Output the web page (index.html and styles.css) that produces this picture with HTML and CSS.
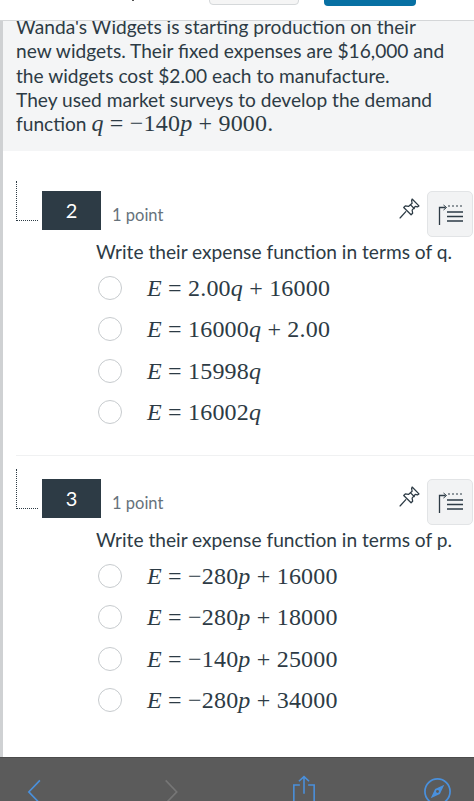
FILE: index.html
```html
<!DOCTYPE html>
<html lang="en">
<head>
<meta charset="utf-8">
<title>Quiz</title>
<link rel="stylesheet" href="styles.css">
</head>
<body>
<header class="topbar">
  <span class="tick"></span>
  <span class="btn btn-light"></span>
  <span class="btn btn-blue"></span>
</header>
<main class="page">
  <section class="intro">
    <p>Wanda's Widgets is starting production on their new widgets. Their fixed expenses are $16,000 and the widgets cost $2.00 each to manufacture.<br>They used market surveys to develop the demand function <span class="m"><i>q</i> = −140<i>p</i> + 9000.</span></p>
  </section>

  <section class="question q2">
    <div class="q-head">
      <span class="corner"></span>
      <span class="num">2</span>
      <span class="pts">1 point</span>
      <svg class="pin" viewBox="0 0 20 20" aria-hidden="true"><g fill="none" stroke="#2d3b45" stroke-width="1.200" stroke-linejoin="round" stroke-linecap="round"><path d="M12.500 1L19 7.500l-1.500 1-2-.5-3 3.500.5 3-1.500 1.500-7-7L6 7.500l3 .5 3.500-3-.5-2.500z"/><path d="M1 19l5.500-6"/><path d="M11 6.500l3.500 3.500"/></g></svg>
      <span class="tool"><svg viewBox="0 0 26 26" aria-hidden="true"><g fill="none" stroke="#2d3b45" stroke-width="1.300"><path d="M2.500 24V6.500h6"/><path d="M6.500 4l3 2.500-3 2.500" stroke-width="1"/><path d="M11 5h2M15 5h2M19 5h2M23 5h2" stroke-width="1"/><path d="M10 11h16M10 15.500h16M10 20h16"/></g></svg></span>
    </div>
    <p class="prompt">Write their expense function in terms of q.</p>
    <ul class="opts">
      <li><span class="radio"></span><span class="m"><i>E</i> = 2.00<i>q</i> + 16000</span></li>
      <li><span class="radio"></span><span class="m"><i>E</i> = 16000<i>q</i> + 2.00</span></li>
      <li><span class="radio"></span><span class="m"><i>E</i> = 15998<i>q</i></span></li>
      <li><span class="radio"></span><span class="m"><i>E</i> = 16002<i>q</i></span></li>
    </ul>
  </section>

  <hr class="rule">

  <section class="question q3">
    <div class="q-head">
      <span class="corner"></span>
      <span class="num">3</span>
      <span class="pts">1 point</span>
      <svg class="pin" viewBox="0 0 20 20" aria-hidden="true"><g fill="none" stroke="#2d3b45" stroke-width="1.200" stroke-linejoin="round" stroke-linecap="round"><path d="M12.500 1L19 7.500l-1.500 1-2-.5-3 3.500.5 3-1.500 1.500-7-7L6 7.500l3 .5 3.500-3-.5-2.500z"/><path d="M1 19l5.500-6"/><path d="M11 6.500l3.500 3.500"/></g></svg>
      <span class="tool"><svg viewBox="0 0 26 26" aria-hidden="true"><g fill="none" stroke="#2d3b45" stroke-width="1.300"><path d="M2.500 24V6.500h6"/><path d="M6.500 4l3 2.500-3 2.500" stroke-width="1"/><path d="M11 5h2M15 5h2M19 5h2M23 5h2" stroke-width="1"/><path d="M10 11h16M10 15.500h16M10 20h16"/></g></svg></span>
    </div>
    <p class="prompt">Write their expense function in terms of p.</p>
    <ul class="opts">
      <li><span class="radio"></span><span class="m"><i>E</i> = −280<i>p</i> + 16000</span></li>
      <li><span class="radio"></span><span class="m"><i>E</i> = −280<i>p</i> + 18000</span></li>
      <li><span class="radio"></span><span class="m"><i>E</i> = −140<i>p</i> + 25000</span></li>
      <li><span class="radio"></span><span class="m"><i>E</i> = −280<i>p</i> + 34000</span></li>
    </ul>
  </section>
</main>
<footer class="safari">
  <svg class="ico back" viewBox="0 0 18 30" aria-hidden="true"><path d="M14.500 3L2 16l12.500 13" fill="none" stroke="#4a90dc" stroke-width="1.800"/></svg>
  <svg class="ico fwd" viewBox="0 0 18 30" aria-hidden="true"><path d="M3 3l12.500 13L3 29" fill="none" stroke="#767676" stroke-width="1.800"/></svg>
  <svg class="ico share" viewBox="0 0 26 32" aria-hidden="true"><g fill="none" stroke="#4a90dc" stroke-width="1.700"><path d="M8.500 10.500H2v21h22v-21h-6.500"/><path d="M13 20V1.500M7.500 6.500L13 1.500l5.500 5"/></g></svg>
  <svg class="ico compass" viewBox="0 0 30 32" aria-hidden="true"><circle cx="15" cy="15" r="13" fill="none" stroke="#4a90dc" stroke-width="1.800"/><path d="M22 8l-9.500 4.500L8 22l9.500-4.500z" fill="#4a90dc"/><circle cx="15" cy="15" r="1.500" fill="#5b5b5b"/></svg>
</footer>
</body>
</html>
```
FILE: styles.css
```css
* { box-sizing: border-box; }
html, body { margin: 0; padding: 0; }
body {
  width: 474px;
  height: 801px;
  overflow: hidden;
  background: #fff;
  color: #2d3b45;
  font-family: Lato, "Liberation Sans", sans-serif;
  display: flex;
  flex-direction: column;
}
p { margin: 0; }
.topbar {
  position: relative;
  flex: 0 0 21px;
  background: #fff;
  border-bottom: 1px solid #d4d6d8;
}
.tick { position: absolute; left: 132px; top: 0; width: 2px; height: 1px; background: #555; }
.btn { position: absolute; top: -10px; border-radius: 4px; }
.btn-light { left: 209px; width: 90px; height: 15px; background: #f5f5f5; border: 1px solid #d5d8da; }
.btn-blue { left: 324px; width: 92px; height: 16px; background: #0770a3; }
.page {
  flex: 1;
  min-height: 0;
  overflow: hidden;
  border-left: 3px solid #cfd1d3;
  background: #fff;
}
.intro {
  height: 130px;
  overflow: hidden;
  background: #f4f5f6;
  padding: 0 26px 0 13px;
  font-size: 19.150px;
  line-height: 24.300px;
}
.intro p { margin-top: -6px; }
.m {
  font-family: "Liberation Serif", "Times New Roman", serif;
  font-size: 24px;
  letter-spacing: .2px;
  line-height: 20px;
  color: #2d3b45;
}
.question { display: flex; flex-direction: column; }
.q2 { padding-top: 40px; }
.rule { height: 1px; margin: 22px 0 23px 13px; border: 0; background: #f0f1f2; }
.q-head { position: relative; height: 39px; }
.corner {
  position: absolute; left: 13px; top: -10px; width: 22px; height: 40px;
  border-left: 1px dotted #2d3b45;
  border-bottom: 1px dotted #2d3b45;
}
.num {
  position: absolute; left: 39px; top: 0; width: 59px; height: 39px;
  background: #2d3b45; color: #fff;
  font-size: 20px; line-height: 39px; text-align: center;
}
.pts { position: absolute; left: 109px; top: 13px; font-size: 16.500px; line-height: 22px; color: #66727b; }
.pin { position: absolute; left: 396px; top: 7px; width: 21px; height: 21px; }
.tool {
  position: absolute; left: 424px; top: 0; width: 46px; height: 46px;
  background: #f2f3f4; border: 1px solid #e2e4e6; border-radius: 5px;
  display: flex; align-items: center; justify-content: center;
}
.tool svg { width: 26px; height: 26px; }
.prompt { margin: 10px 0 0 93px; font-size: 19.150px; line-height: 24px; white-space: nowrap; }
.opts { list-style: none; margin: 3px 0 0 95px; padding: 0; }
.opts li { display: flex; align-items: center; height: 41.500px; }
.radio {
  flex: 0 0 24px; height: 24px; border-radius: 50%;
  background: #fff; border: 1.500px solid #c7cbce;
  margin-right: 25px;
}
.safari {
  position: relative;
  flex: 0 0 44px;
  background: #5b5b5b;
  border-top: 1px solid #4c4c4c;
  overflow: hidden;
}
.ico { position: absolute; }
.back { left: 27px; top: 19px; width: 16px; height: 28px; }
.fwd { left: 163px; top: 19px; width: 16px; height: 28px; }
.share { left: 292px; top: 17px; width: 24px; height: 30px; }
.compass { left: 423px; top: 19px; width: 29px; height: 31px; }
```
